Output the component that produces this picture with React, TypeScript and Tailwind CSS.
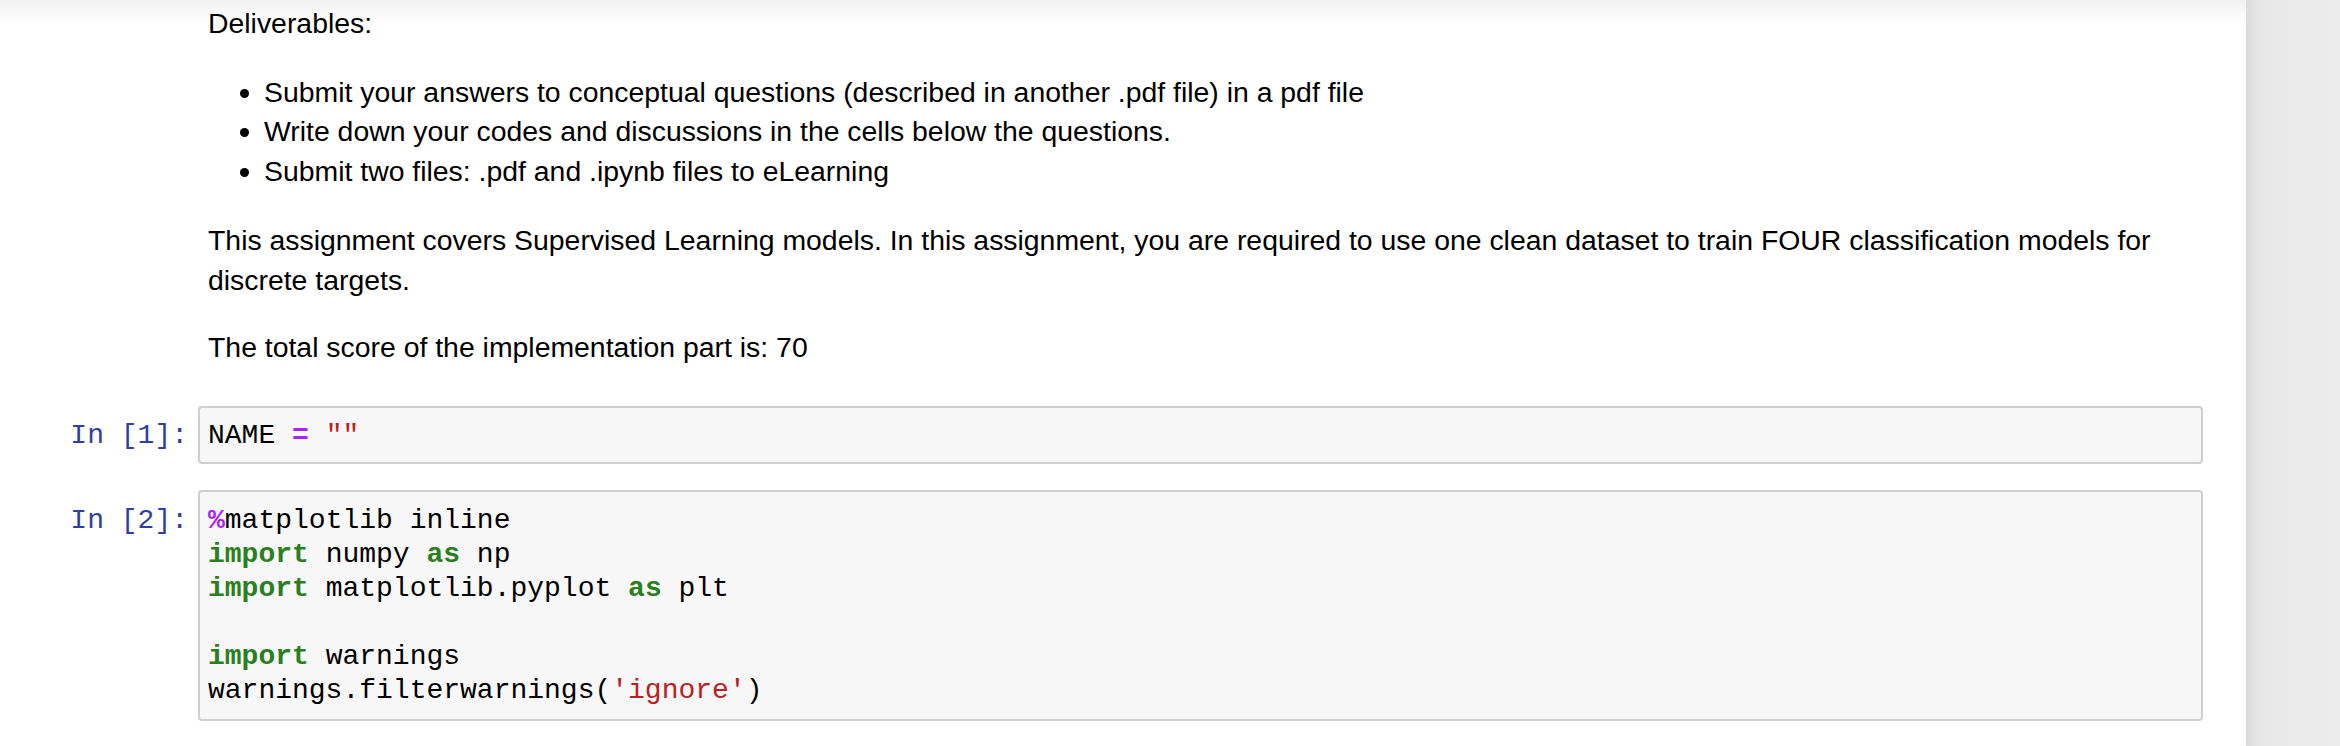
import React from "react";

// one code line is a list of [text, kind] pieces
type Piece = [string, "plain" | "kw" | "op" | "str"];

const cell1: Piece[][] = [[["NAME ", "plain"], ["=", "op"], [" ", "plain"], ['""', "str"]]];

const cell2: Piece[][] = [
  [["%", "op"], ["matplotlib inline", "plain"]],
  [["import", "kw"], [" numpy ", "plain"], ["as", "kw"], [" np", "plain"]],
  [["import", "kw"], [" matplotlib.pyplot ", "plain"], ["as", "kw"], [" plt", "plain"]],
  [],
  [["import", "kw"], [" warnings", "plain"]],
  [["warnings.filterwarnings(", "plain"], ["'ignore'", "str"], [")", "plain"]],
];

const pieceClass = {
  plain: "text-black",
  kw: "text-[#2a7f1e] font-bold",
  op: "text-[#aa22ff] font-bold",
  str: "text-[#ba2121]",
};

function CodeCell({ n, lines, pad }: { n: number; lines: Piece[][]; pad: string }) {
  return (
    <div className="flex">
      <div className="w-[198px] shrink-0 pr-[10px] text-right">
        <div className={`${pad} border-y-2 border-transparent`}>
          <span className="text-[#303f9f]">In [{n}]:</span>
        </div>
      </div>
      <div className={`flex-1 rounded-[4px] border-2 border-[#cfcfcf] bg-[#f7f7f7] pl-[8px] ${pad}`}>
        {lines.map((line, i) => (
          <div key={i} className="h-[34px] whitespace-pre">
            {line.map(([text, kind], j) => (
              <span key={j} className={pieceClass[kind]}>
                {text}
              </span>
            ))}
          </div>
        ))}
      </div>
    </div>
  );
}

export default function App() {
  return (
    <div className="flex h-[746px] w-full overflow-hidden bg-white">
      <div className="relative flex-1 pr-[43px]">
        {/* header shadow */}
        <div className="absolute inset-x-0 top-0 h-[22px] bg-gradient-to-b from-[#f1f1f1] to-white" />

        <div className="relative font-['Liberation_Sans',Arial,sans-serif] text-[28.4px] leading-[39.5px] text-black">
          <div className="pl-[208px] pt-[4px]">
            <p>Deliverables:</p>
            <ul className="mt-[29px] list-disc pl-[56px]">
              <li>Submit your answers to conceptual questions (described in another .pdf file) in a pdf file</li>
              <li>Write down your codes and discussions in the cells below the questions.</li>
              <li>Submit two files: .pdf and .ipynb files to eLearning</li>
            </ul>
            <p className="mt-[30px]">
              This assignment covers Supervised Learning models. In this assignment, you are required to use one clean
              dataset to train FOUR classification models for discrete targets.
            </p>
            <p className="mt-[28px]">The total score of the implementation part is: 70</p>
          </div>
        </div>

        <div className="relative mt-[38px] flex flex-col gap-[26px] font-['Liberation_Mono','Courier_New',monospace] text-[28px] leading-[34px]">
          <CodeCell n={1} lines={cell1} pad="pt-[11px] pb-[9px]" />
          <CodeCell n={2} lines={cell2} pad="pt-[12px] pb-[11px]" />
        </div>
      </div>
      <div className="w-[94px] shrink-0 bg-[linear-gradient(to_right,#dcdcdc,#e8e8e8_16px,#ececec)]" />
    </div>
  );
}
